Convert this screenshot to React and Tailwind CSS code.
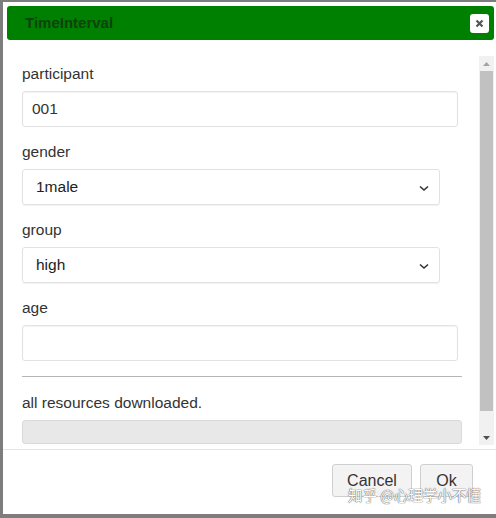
import React from "react";

const font = { fontFamily: '"Liberation Sans", Arial, sans-serif' };

function Chevron() {
  return (
    <svg width="10" height="7" viewBox="0 0 10 7" className="absolute right-[10px] top-[15px]">
      <path d="M1 1.5 L5 5 L9 1.5" fill="none" stroke="#333" strokeWidth="1.6" />
    </svg>
  );
}

function Field({ label, children }) {
  return (
    <div className="mb-[15px]">
      <div className="h-5 leading-5 text-[15.5px] text-[#333] mb-[7px]">{label}</div>
      {children}
    </div>
  );
}

export default function App() {
  return (
    <div
      className="relative w-[496px] h-[518px] bg-white border-l-[3px] border-t-2 border-b-4 border-[#7d7d7d] flex flex-col"
      style={font}
    >
      {/* title bar */}
      <div className="ml-1 mr-[2px] mt-1 h-[34px] bg-[#008000] rounded-[3px] flex items-center justify-between pl-[18px] pr-[5px]">
        <span className="text-[15px] font-bold text-[#0e430e]">TimeInterval</span>
        <button className="w-[19px] h-[19px] bg-white rounded-[3px] flex items-center justify-center">
          <svg width="9" height="9" viewBox="0 0 9 9">
            <path d="M1.5 1.5 L7.5 7.5 M7.5 1.5 L1.5 7.5" stroke="#555" strokeWidth="2.2" />
          </svg>
        </button>
      </div>

      {/* body */}
      <div className="mt-4 h-[389px] flex">
        <div className="flex-1 overflow-hidden pl-[19px] pr-[17px] pt-2">
          <Field label="participant">
            <div className="w-[436px] h-9 border border-[#e2e2e2] rounded-[3px] shadow-[inset_0_1px_1px_rgba(0,0,0,0.05)] flex items-center px-[9px] text-[15.5px] text-[#333]">
              001
            </div>
          </Field>
          <Field label="gender">
            <div className="relative w-[418px] h-9 border border-[#e2e2e2] rounded-[3px] shadow-[0_1px_1px_rgba(0,0,0,0.06)] flex items-center px-[13px] text-[15.5px] text-[#222]">
              1male
              <Chevron />
            </div>
          </Field>
          <Field label="group">
            <div className="relative w-[418px] h-9 border border-[#e2e2e2] rounded-[3px] shadow-[0_1px_1px_rgba(0,0,0,0.06)] flex items-center px-[13px] text-[15.5px] text-[#222]">
              high
              <Chevron />
            </div>
          </Field>
          <Field label="age">
            <div className="w-[436px] h-9 border border-[#e2e2e2] rounded-[3px] shadow-[inset_0_1px_1px_rgba(0,0,0,0.05)]" />
          </Field>
          <div className="w-[440px] border-t border-[#b5b5b5] mt-[1px]" />
          <div className="h-5 leading-5 text-[15.5px] text-[#333] mt-[16px]">all resources downloaded.</div>
          <div className="w-[440px] h-6 mt-[7px] bg-[#e8e8e8] border border-[#dadada] rounded-[3px]" />
        </div>
        {/* scrollbar */}
        <div className="w-[15px] mr-[2px] bg-[#f1f1f1] flex flex-col items-center">
          <div className="h-[15px] flex items-center justify-center">
            <svg width="7" height="4" viewBox="0 0 7 4"><path d="M0 4 L3.5 0 L7 4 Z" fill="#a3a3a3" /></svg>
          </div>
          <div className="w-[13px] h-[340px] bg-[#c1c1c1]" />
          <div className="flex-1" />
          <div className="h-[15px] flex items-center justify-center">
            <svg width="7" height="4" viewBox="0 0 7 4"><path d="M0 0 L3.5 4 L7 0 Z" fill="#505050" /></svg>
          </div>
        </div>
      </div>

      {/* footer */}
      <div className="mt-[4px] border-t border-[#e5e5e5] flex-1 flex justify-end items-start pt-[14px] pr-[23px] gap-2">
        <button className="w-20 h-[33px] bg-[#f3f3f3] border border-[#cfcfcf] rounded-[3px] text-base text-[#333]">
          Cancel
        </button>
        <button className="w-[53px] h-[33px] bg-[#f3f3f3] border border-[#cfcfcf] rounded-[3px] text-base text-[#333]">
          Ok
        </button>
      </div>

      {/* watermark */}
      <div
        className="absolute left-[345px] top-[483px] whitespace-nowrap text-[14.5px] leading-5 text-white [text-shadow:0_0_1px_#555,0_0_1px_#555]"
        style={{ fontFamily: '"Noto Sans CJK SC", sans-serif' }}
      >
        知乎 @心理学小不懂
      </div>
    </div>
  );
}
